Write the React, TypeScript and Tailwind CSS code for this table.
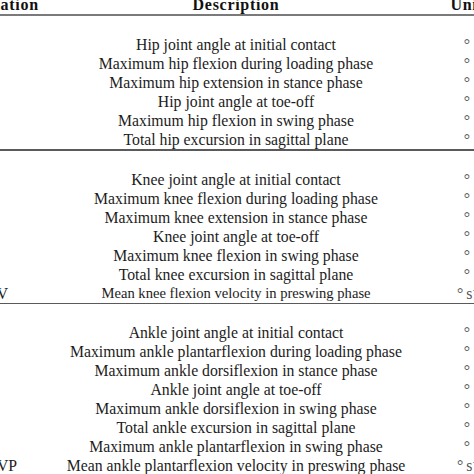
const groups = [
  {
    name: "Hip",
    rows: [
      { abbr: "HIC", desc: "Hip joint angle at initial contact", unit: "deg" },
      { abbr: "HFL", desc: "Maximum hip flexion during loading phase", unit: "deg" },
      { abbr: "HES", desc: "Maximum hip extension in stance phase", unit: "deg" },
      { abbr: "HT", desc: "Hip joint angle at toe-off", unit: "deg" },
      { abbr: "HF", desc: "Maximum hip flexion in swing phase", unit: "deg" },
      { abbr: "HE", desc: "Total hip excursion in sagittal plane", unit: "deg" },
    ],
  },
  {
    name: "Knee",
    rows: [
      { abbr: "KIC", desc: "Knee joint angle at initial contact", unit: "deg" },
      { abbr: "KFL", desc: "Maximum knee flexion during loading phase", unit: "deg" },
      { abbr: "KES", desc: "Maximum knee extension in stance phase", unit: "deg" },
      { abbr: "KT", desc: "Knee joint angle at toe-off", unit: "deg" },
      { abbr: "KF", desc: "Maximum knee flexion in swing phase", unit: "deg" },
      { abbr: "KE", desc: "Total knee excursion in sagittal plane", unit: "deg" },
      { abbr: "MKFV", desc: "Mean knee flexion velocity in preswing phase", unit: "vel", small: true },
    ],
  },
  {
    name: "Ankle",
    rows: [
      { abbr: "AIC", desc: "Ankle joint angle at initial contact", unit: "deg" },
      { abbr: "APL", desc: "Maximum ankle plantarflexion during loading phase", unit: "deg" },
      { abbr: "AD", desc: "Maximum ankle dorsiflexion in stance phase", unit: "deg" },
      { abbr: "AT", desc: "Ankle joint angle at toe-off", unit: "deg" },
      { abbr: "AS", desc: "Maximum ankle dorsiflexion in swing phase", unit: "deg" },
      { abbr: "AE", desc: "Total ankle excursion in sagittal plane", unit: "deg" },
      { abbr: "AP", desc: "Maximum ankle plantarflexion in swing phase", unit: "deg" },
      { abbr: "MAPFVP", desc: "Mean ankle plantarflexion velocity in preswing phase", unit: "vel" },
    ],
  },
];

type Row = { abbr: string; desc: string; unit: string; small?: boolean };

function Unit({ unit }: { unit: string }) {
  if (unit === "vel") {
    return (
      <span className="ml-[6px] whitespace-nowrap">
        °<span className="ml-[3px]">s</span>
        <sup className="text-[10px]">−1</sup>
      </span>
    );
  }
  return <span>°</span>;
}

function DataRow({ row }: { row: Row }) {
  return (
    <div className="flex h-[19px] items-center leading-[19px]">
      <div className="w-[91px] text-center">{row.abbr}</div>
      <div className={`w-[410px] whitespace-nowrap text-center ${row.small ? "text-[14.6px]" : ""}`}>
        {row.desc}
      </div>
      <div className="w-[52px] text-center text-[#555]">
        <Unit unit={row.unit} />
      </div>
    </div>
  );
}

export default function App() {
  return (
    <div className="h-[474px] w-[474px] overflow-hidden bg-white text-[15.75px] text-[#1c1c1c] [font-family:'Liberation_Serif',serif]">
      <div className="-ml-[60px] w-[553px]">
        <div className="-mt-[5px] flex h-[19px] items-center text-[16px] font-bold leading-[19px] tracking-[0.7px] text-[#111]">
          <div className="w-[91px] text-center">Abbreviation</div>
          <div className="w-[410px] text-center">Description</div>
          <div className="w-[52px] text-center">Unit</div>
        </div>
        <div className="h-[2px] bg-[#7a7a7a]" />
        {groups.map((g, gi) => (
          <div key={g.name}>
            <div className="h-[19px]" />
            {g.rows.map((r) => (
              <DataRow key={r.abbr} row={r} />
            ))}
            {gi < groups.length - 1 && <div className="h-[1.5px] bg-[#5a5a5a]" />}
          </div>
        ))}
      </div>
    </div>
  );
}
